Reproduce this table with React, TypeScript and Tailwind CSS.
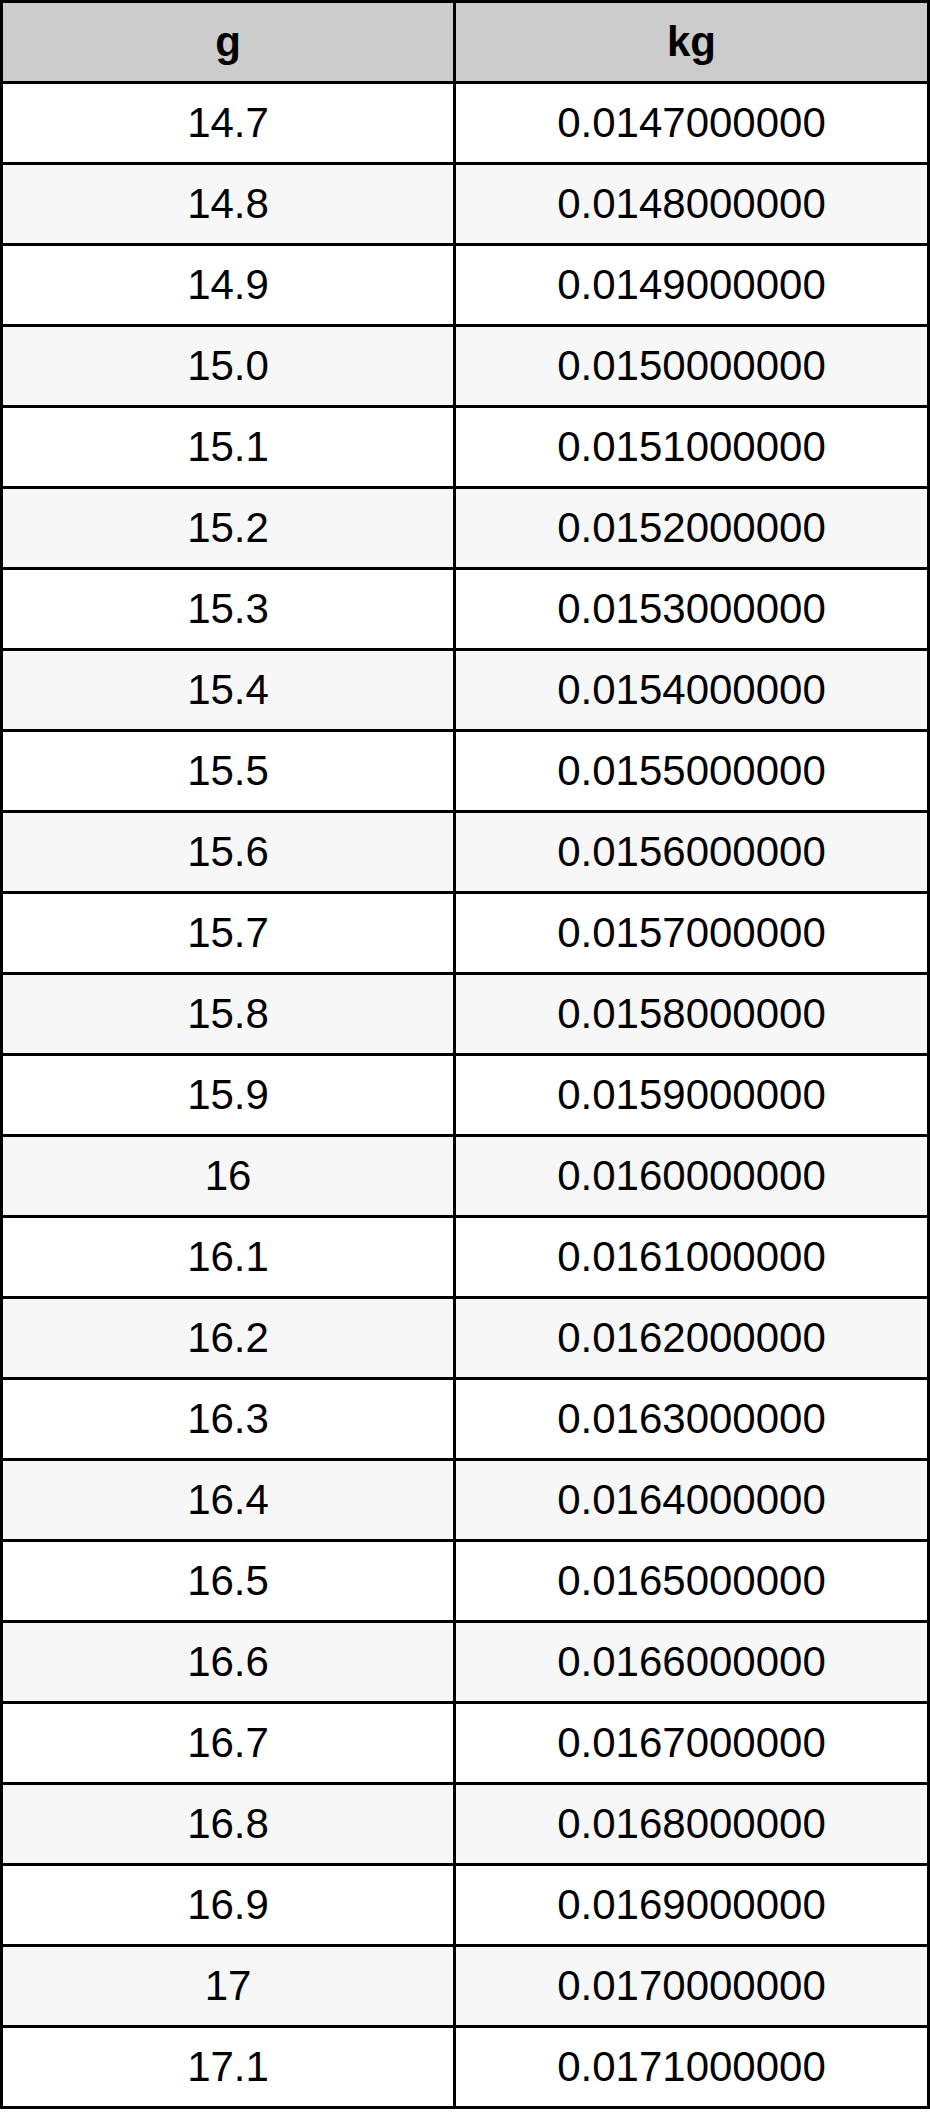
// g → kg conversion table

const rows: [string, string][] = [
  ["14.7", "0.0147000000"],
  ["14.8", "0.0148000000"],
  ["14.9", "0.0149000000"],
  ["15.0", "0.0150000000"],
  ["15.1", "0.0151000000"],
  ["15.2", "0.0152000000"],
  ["15.3", "0.0153000000"],
  ["15.4", "0.0154000000"],
  ["15.5", "0.0155000000"],
  ["15.6", "0.0156000000"],
  ["15.7", "0.0157000000"],
  ["15.8", "0.0158000000"],
  ["15.9", "0.0159000000"],
  ["16", "0.0160000000"],
  ["16.1", "0.0161000000"],
  ["16.2", "0.0162000000"],
  ["16.3", "0.0163000000"],
  ["16.4", "0.0164000000"],
  ["16.5", "0.0165000000"],
  ["16.6", "0.0166000000"],
  ["16.7", "0.0167000000"],
  ["16.8", "0.0168000000"],
  ["16.9", "0.0169000000"],
  ["17", "0.0170000000"],
  ["17.1", "0.0171000000"],
];

export default function App() {
  return (
    <div className="bg-white font-['Liberation_Sans',Arial,sans-serif] text-[42px] leading-none text-black">
      <div className="w-[930px] border-[3px] border-black">
        {/* Header */}
        <div className="flex h-[78px] bg-[#cccccc] font-bold">
          <div className="flex w-[453px] items-center justify-center border-r-[3px] border-black">
            g
          </div>
          <div className="flex flex-1 items-center justify-center">kg</div>
        </div>

        {/* Body */}
        {rows.map(([g, kg], i) => (
          <div
            key={g}
            className={
              i % 2 === 1
                ? "flex h-[81px] border-t-[3px] border-black bg-[#f7f7f7]"
                : "flex h-[81px] border-t-[3px] border-black bg-white"
            }
          >
            <div className="flex w-[453px] items-center justify-center border-r-[3px] border-black">
              {g}
            </div>
            <div className="flex flex-1 items-center justify-center">{kg}</div>
          </div>
        ))}
      </div>
    </div>
  );
}
